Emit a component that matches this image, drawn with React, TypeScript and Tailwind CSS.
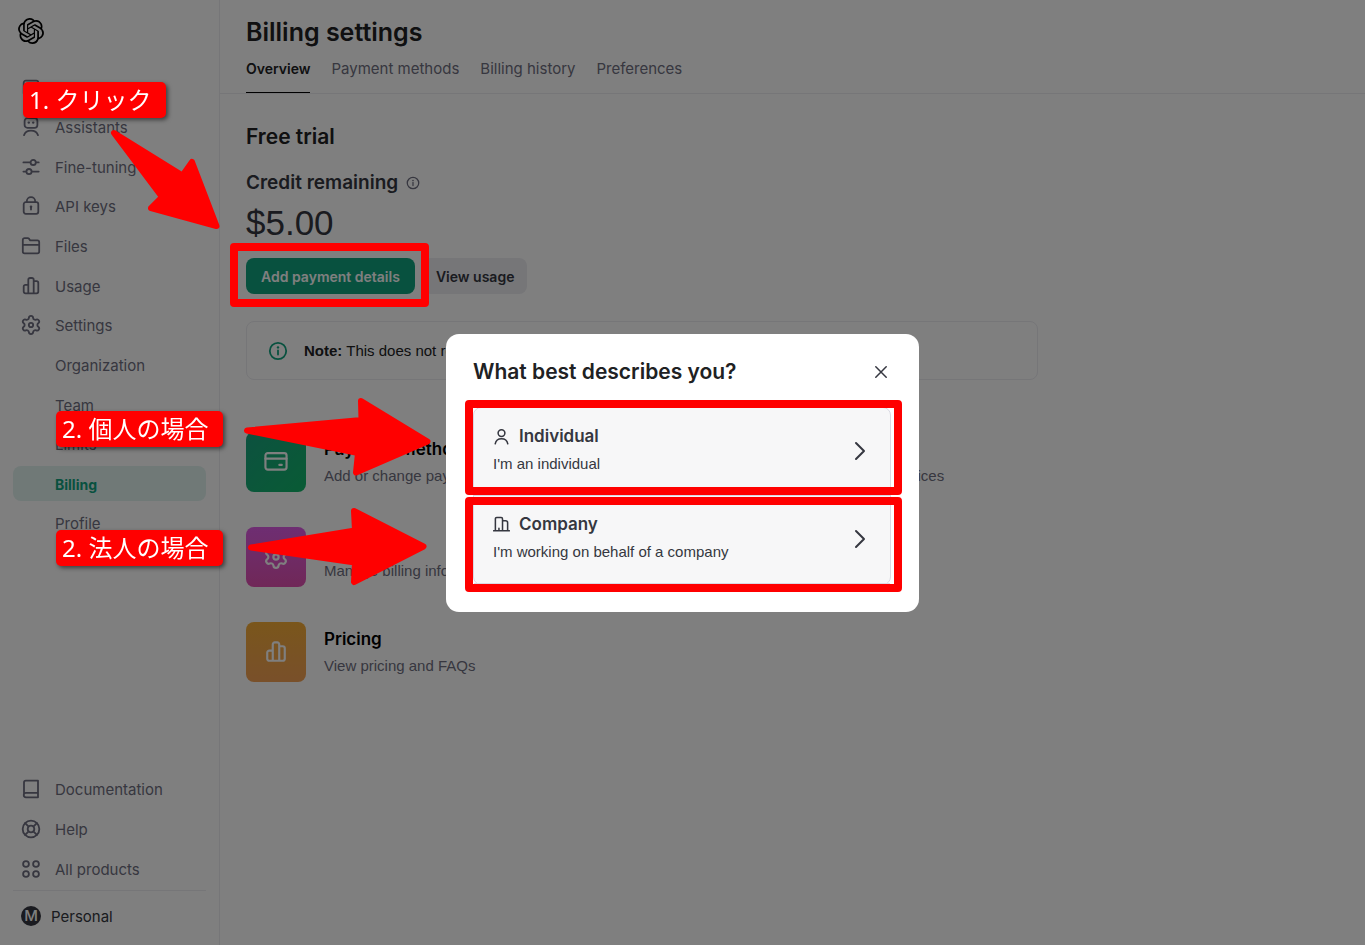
import React from 'react';
import { LifeBuoy } from 'lucide-react';
import { SiOpenai } from 'react-icons/si';

type IconProps = { className?: string };

const Svg: React.FC<IconProps & { children: React.ReactNode }> = ({ className = "size-5", children }) => (
  <svg
    viewBox="0 0 20 20"
    fill="none"
    stroke="currentColor"
    strokeWidth="1.8"
    strokeLinecap="round"
    strokeLinejoin="round"
    aria-hidden="true"
    className={`shrink-0 ${className}`}
  >
    {children}
  </svg>
);

const PlaygroundIcon = (props: IconProps) => (
  <Svg {...props}>
    <rect x="2.7" y="2.7" width="14.6" height="14.6" rx="2" />
    <path d="m6 7 3 3-3 3M11 13h3" />
  </Svg>
);

const AssistantIcon = (props: IconProps) => (
  <Svg {...props}>
    <rect x="3.6" y="1.2" width="12.8" height="9.6" rx="2.8" />
    <circle cx="7.8" cy="5.6" r="1.2" fill="currentColor" stroke="none" />
    <circle cx="12.2" cy="5.6" r="1.2" fill="currentColor" stroke="none" />
    <path d="M3 18.2c.9-3 3.6-4.6 7-4.6s6.1 1.6 7 4.6" />
  </Svg>
);

const SlidersIcon = (props: IconProps) => (
  <Svg {...props}>
    <path d="M2.4 5.4H9M15 5.4h2.7M2.4 14.6h2.8M11 14.6h6.7" />
    <circle cx="12.2" cy="5.4" r="2.6" />
    <circle cx="8" cy="14.6" r="2.6" />
  </Svg>
);

const LockIcon = (props: IconProps) => (
  <Svg {...props}>
    <rect x="2.7" y="6.2" width="14.6" height="11.6" rx="2" />
    <path d="M5.8 6.2V5.4a4.2 4.2 0 0 1 8.4 0v.8M10 11v2.6" />
    <circle cx="10" cy="10.8" r="1.3" fill="currentColor" stroke="none" />
  </Svg>
);

const FolderIcon = (props: IconProps) => (
  <Svg {...props}>
    <path d="M1.8 4A1.8 1.8 0 0 1 3.6 2.2h3.2c.6 0 1 .2 1.4.7l1 1.5h7.2a1.8 1.8 0 0 1 1.8 1.8v9.4a1.8 1.8 0 0 1-1.8 1.8H3.6a1.8 1.8 0 0 1-1.8-1.8zM1.8 8.8h16.4" />
  </Svg>
);

const ChartIcon = (props: IconProps) => (
  <Svg {...props}>
    <path d="M7.3 17.3H4.4a1.7 1.7 0 0 1-1.7-1.7v-5a1.7 1.7 0 0 1 1.7-1.7h2.9zM7.3 17.3V3.7A1.7 1.7 0 0 1 9 2h2a1.7 1.7 0 0 1 1.7 1.7v13.6zM12.7 5.2h2.9a1.7 1.7 0 0 1 1.7 1.7v8.7a1.7 1.7 0 0 1-1.7 1.7h-2.9z" />
  </Svg>
);

const GearIcon = ({ className = "size-5" }: IconProps) => (
  <svg viewBox="1 1 22 22" fill="none" stroke="currentColor" strokeWidth="2" aria-hidden="true" className={`shrink-0 ${className}`}>
    <path d="M9.671 4.136a2.34 2.34 0 0 1 4.659 0 2.34 2.34 0 0 0 3.319 1.915 2.34 2.34 0 0 1 2.33 4.033 2.34 2.34 0 0 0 0 3.831 2.34 2.34 0 0 1-2.33 4.033 2.34 2.34 0 0 0-3.319 1.915 2.34 2.34 0 0 1-4.659 0 2.34 2.34 0 0 0-3.32-1.915 2.34 2.34 0 0 1-2.33-4.033 2.34 2.34 0 0 0 0-3.831A2.34 2.34 0 0 1 6.35 6.051a2.34 2.34 0 0 0 3.319-1.915" />
    <circle cx="12" cy="12" r="2.4" />
  </svg>
);

const BookIcon = (props: IconProps) => (
  <Svg {...props}>
    <path d="M17 13.8V1.6H4.8A1.8 1.8 0 0 0 3 3.4v12.8M17 13.8H5a2.2 2.2 0 0 0 0 4.5h12zM17 18.3v-4.5" />
  </Svg>
);

const ProductsIcon = (props: IconProps) => (
  <Svg {...props}>
    <circle cx="5" cy="5" r="2.9" />
    <circle cx="15" cy="5" r="2.9" />
    <circle cx="5" cy="15" r="2.9" />
    <circle cx="15" cy="15" r="2.9" />
  </Svg>
);

const HelpIcon = () => <LifeBuoy className="size-5 shrink-0" strokeWidth={2.2} />;

const InfoIcon = (props: IconProps) => (
  <Svg {...props}>
    <circle cx="10" cy="10" r="8.2" />
    <path d="M10 9.4v4.2" />
    <circle cx="10" cy="6.4" r="1.2" fill="currentColor" stroke="none" />
  </Svg>
);

const CardIcon = (props: IconProps) => (
  <Svg {...props}>
    <rect x="1.2" y="2.6" width="17.6" height="13.8" rx="2" />
    <path d="M1.2 7.2h17.6M12.8 12.4h2" />
  </Svg>
);

const PersonIcon = (props: IconProps) => (
  <Svg {...props}>
    <circle cx="10" cy="6" r="4" />
    <path d="M2.6 18.6c.8-4.2 3.8-6 7.4-6s6.6 1.8 7.4 6" />
  </Svg>
);

const BuildingIcon = (props: IconProps) => (
  <Svg {...props}>
    <path d="M.8 17.4h18.4M2.8 17.4V3.4c0-1 .6-1.6 1.6-1.6h5.2c1 0 1.6.6 1.6 1.6v14M11.2 5.6h3.6c1.4 0 2.4 1 2.4 2.4v9.4M7 17v-2.6" />
  </Svg>
);

const navItems = [
  { label: "Playground", icon: PlaygroundIcon },
  { label: "Assistants", icon: AssistantIcon },
  { label: "Fine-tuning", icon: SlidersIcon },
  { label: "API keys", icon: LockIcon },
  { label: "Files", icon: FolderIcon },
  { label: "Usage", icon: ChartIcon },
  { label: "Settings", icon: GearIcon },
  { label: "Organization" },
  { label: "Team" },
  { label: "Limits" },
  { label: "Billing", active: true },
  { label: "Profile" },
];

const footerItems = [
  { label: "Documentation", icon: BookIcon },
  { label: "Help", icon: HelpIcon },
  { label: "All products", icon: ProductsIcon },
];

const tabs = ["Overview", "Payment methods", "Billing history", "Preferences"];

const cards = [
  { title: "Payment methods", text: "Add or change payment method", icon: CardIcon, color: "bg-linear-to-br from-[#1aa37f] to-[#12b76a]" },
  { title: "Billing history", text: "View past and current invoices", icon: BookIcon, color: "bg-linear-to-b from-[#ef4146] to-[#f4777a]" },
  { title: "Settings", text: "Manage billing information", icon: GearIcon, color: "bg-linear-to-b from-[#dd5ce5] to-[#e04fb0]" },
  { title: "Usage limits", text: "Set monthly spend limits", icon: SlidersIcon, color: "bg-linear-to-b from-[#5436da] to-[#7c66e3]" },
  { title: "Pricing", text: "View pricing and FAQs", icon: ChartIcon, color: "bg-linear-to-b from-[#f4ac36] to-[#f2a054]" },
];

const NavLink = ({ label, icon: Icon, active }: { label: string; icon?: React.FC<IconProps>; active?: boolean }) => (
  <a
    href="#"
    className={`flex h-[35px] items-center gap-[14px] rounded-lg px-2 ${
      active ? "bg-[#e1f2ef] text-sm font-bold text-[#10a37f]" : "text-[#6e6e80]"
    }`}
  >
    {Icon ? <Icon /> : <span className="size-5" />}
    <span className="pt-0.5">{label}</span>
  </a>
);

const Sidebar = () => (
  <aside className="flex w-[220px] shrink-0 flex-col border-r border-[#ececf1] px-[13px] pt-[18px] pb-[10px]">
    <a href="#" aria-label="Home" className="mb-[26px] ml-[5px] w-[26px] text-black">
      <SiOpenai className="size-[26px]" />
    </a>
    <nav className="flex h-[471px] flex-col justify-between">
      {navItems.map((item) => (
        <NavLink key={item.label} {...item} />
      ))}
    </nav>
    <div className="mt-auto flex flex-col gap-[5px] pb-1">
      {footerItems.map((item) => (
        <NavLink key={item.label} {...item} />
      ))}
    </div>
    <button type="button" className="flex items-center gap-[10px] border-t border-[#ececf1] px-2 pt-1.5 text-[#353740]">
      <span className="flex size-5 items-center justify-center rounded-full bg-[#353740] font-medium text-white">M</span>
      <span className="pt-0.5 leading-9">Personal</span>
    </button>
  </aside>
);

const options = [
  { title: "Individual", text: "I'm an individual", icon: PersonIcon },
  { title: "Company", text: "I'm working on behalf of a company", icon: BuildingIcon },
];

const Dialog = () => (
  <div className="fixed inset-0 flex items-center justify-center bg-black/50">
    <div role="dialog" aria-labelledby="dialog-title" className="w-[473px] rounded-[13px] bg-white pt-6 pr-7 pb-[27px] pl-[27px]">
      <div className="flex h-7 items-center justify-between">
        <h2 id="dialog-title" className="font-['Inter',sans-serif] text-[21px] font-semibold text-[#202123]">
          What best describes you?
        </h2>
        <button type="button" aria-label="Close" className="flex size-5 items-center justify-center text-[#353740]">
          <svg viewBox="0 0 12 12" className="size-3" fill="none" stroke="currentColor" strokeWidth="1.5" strokeLinecap="round">
            <path d="M.8.8 11.2 11.2M11.2.8.8 11.2" />
          </svg>
        </button>
      </div>
      <div className="relative mt-[21px] divide-y divide-[#d9d9e3] rounded-lg border border-[#d9d9e3] bg-[#f7f7f8] text-[#353740]">
        {options.map(({ title, text, icon: Icon }) => (
          <button key={title} type="button" className="flex h-[88px] w-full items-center justify-between pr-6 pl-[19px] text-left">
            <span className="pb-0.5">
              <span className="flex items-center gap-[9px] text-[17px] leading-7 font-semibold">
                <Icon className="size-[17px]" />
                {title}
              </span>
              <span className="block font-['Liberation_Sans',sans-serif] leading-7">{text}</span>
            </span>
            <svg viewBox="0 0 12 20" className="h-5 w-3" fill="none" stroke="currentColor" strokeWidth="2" strokeLinecap="round" strokeLinejoin="round">
              <path d="m2 2 8 8-8 8" />
            </svg>
          </button>
        ))}
        <div className="pointer-events-none absolute -top-2 -right-3 -left-[9px] h-[95px] rounded border-8 border-[#ff0000]" />
        <div className="pointer-events-none absolute -right-3 -bottom-2 -left-[9px] h-[95px] rounded border-8 border-[#ff0000]" />
      </div>
    </div>
  </div>
);

const labelClass =
  "absolute flex h-9 items-center rounded-[5px] bg-[#ff0000] pr-[15px] pl-1.5 font-['Noto_Sans','Noto_Sans_CJK_JP',sans-serif] text-2xl whitespace-nowrap text-white shadow-[2px_2px_4px_rgba(0,0,0,0.5)]";

const Annotations = () => (
  <div className="pointer-events-none absolute inset-0">
    <div className="absolute top-[243px] left-[230px] h-16 w-[199px] rounded border-8 border-[#ff0000]" />
    <div className={`${labelClass} top-[82px] left-[23px]`}>1. クリック</div>
    <div className={`${labelClass} top-[411px] left-14`}>2. 個人の場合</div>
    <div className={`${labelClass} top-[530px] left-14`}>2. 法人の場合</div>
    <svg className="absolute top-0 left-0" width="500" height="620" fill="#ff0000" stroke="#ff0000" strokeWidth="6" strokeLinejoin="round">
      <path d="M114 133 182.5 175.5 192 162 216.5 226 151 208 162 197z" />
      <path d="M247 430.5 361.5 420 361 401 427.5 441.5 356 472.5 358 453z" />
      <path d="M251 547.5 355 530.5 354 511 423.5 546.5 354 582 355 562.5z" />
    </svg>
  </div>
);

const App: React.FC = () => {
  return (
    <div className="relative flex min-h-screen bg-white font-['Inter',sans-serif] text-[15px] leading-5 text-[#353740]">
      <Sidebar />
      <main className="min-w-0 flex-1">
        <header className="border-b border-[#ececf1] px-[26px] pt-4">
          <h1 className="text-[25px] leading-8 font-semibold text-[#202123]">Billing settings</h1>
          <nav className="mt-[11px] flex gap-[21px]">
            {tabs.map((tab, i) => (
              <a
                key={tab}
                href="#"
                className={i === 0 ? "border-b border-black pb-[13px] text-sm font-semibold text-[#202123]" : "pb-[13px] text-[#6e6e80]"}
              >
                {tab}
              </a>
            ))}
          </nav>
        </header>
        <div className="max-w-[844px] px-[26px] pt-[29px]">
          <h2 className="text-[21px] leading-7 font-semibold text-[#202123]">Free trial</h2>
          <h3 className="mt-[18px] flex items-center gap-2 text-[19px] leading-7 font-semibold">
            Credit remaining
            <InfoIcon className="size-[14px] text-[#6e6e80]" />
          </h3>
          <p className="mt-1.5 font-['Liberation_Sans',sans-serif] text-[35px] leading-10">$5.00</p>
          <div className="mt-[15px] flex gap-2 text-sm font-semibold">
            <button type="button" className="h-9 rounded-lg bg-[#10a37f] px-[15px] pt-0.5 text-white">Add payment details</button>
            <button type="button" className="h-9 rounded-lg bg-[#ececf1] px-[13px] pt-0.5">View usage</button>
          </div>
          <div className="mt-[27px] flex h-[59px] items-center gap-4 rounded-lg border border-[#ececf1] px-[21px] text-[#202123]">
            <InfoIcon className="size-5 text-[#10a37f]" />
            <p className="font-['Liberation_Sans',sans-serif]">
              <strong>Note:</strong> This does not reflect the status of your ChatGPT account.
            </p>
          </div>
          <div className="mt-[52px] grid grid-cols-[417px_1fr] gap-y-[35px]">
            {cards.map(({ title, text, icon: Icon, color }) => (
              <a key={title} href="#" className="flex items-center gap-[18px]">
                <span className={`flex size-[60px] items-center justify-center rounded-lg text-white ${color}`}>
                  <Icon className="size-6" />
                </span>
                <span>
                  <span className="block text-[17px] leading-7 font-semibold text-black">{title}</span>
                  <span className="block font-['Liberation_Sans',sans-serif] leading-[26px] text-[#6e6e80]">{text}</span>
                </span>
              </a>
            ))}
          </div>
        </div>
      </main>
      <Dialog />
      <Annotations />
    </div>
  );
};

export default App;
